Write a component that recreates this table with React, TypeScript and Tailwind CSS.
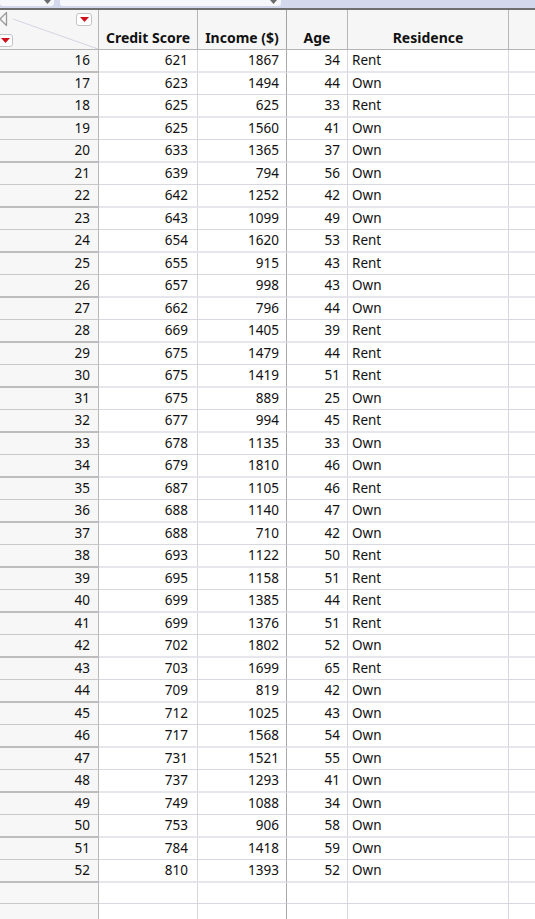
import React from "react";

const rows: [number, number, number, number, string][] = [
  [16, 621, 1867, 34, "Rent"],
  [17, 623, 1494, 44, "Own"],
  [18, 625, 625, 33, "Rent"],
  [19, 625, 1560, 41, "Own"],
  [20, 633, 1365, 37, "Own"],
  [21, 639, 794, 56, "Own"],
  [22, 642, 1252, 42, "Own"],
  [23, 643, 1099, 49, "Own"],
  [24, 654, 1620, 53, "Rent"],
  [25, 655, 915, 43, "Rent"],
  [26, 657, 998, 43, "Own"],
  [27, 662, 796, 44, "Own"],
  [28, 669, 1405, 39, "Rent"],
  [29, 675, 1479, 44, "Rent"],
  [30, 675, 1419, 51, "Rent"],
  [31, 675, 889, 25, "Own"],
  [32, 677, 994, 45, "Rent"],
  [33, 678, 1135, 33, "Own"],
  [34, 679, 1810, 46, "Own"],
  [35, 687, 1105, 46, "Rent"],
  [36, 688, 1140, 47, "Own"],
  [37, 688, 710, 42, "Own"],
  [38, 693, 1122, 50, "Rent"],
  [39, 695, 1158, 51, "Rent"],
  [40, 699, 1385, 44, "Rent"],
  [41, 699, 1376, 51, "Rent"],
  [42, 702, 1802, 52, "Own"],
  [43, 703, 1699, 65, "Rent"],
  [44, 709, 819, 42, "Own"],
  [45, 712, 1025, 43, "Own"],
  [46, 717, 1568, 54, "Own"],
  [47, 731, 1521, 55, "Own"],
  [48, 737, 1293, 41, "Own"],
  [49, 749, 1088, 34, "Own"],
  [50, 753, 906, 58, "Own"],
  [51, 784, 1418, 59, "Own"],
  [52, 810, 1393, 52, "Own"],
];

const cols = "grid grid-cols-[99px_99px_89px_61px_161px_1fr]";

function RedButton() {
  return (
    <div className="w-[16px] h-[13px] rounded-[3px] border border-[#c4c4c4] bg-white flex items-center justify-center">
      <svg width="9" height="5" viewBox="0 0 9 5">
        <path d="M0 0 L9 0 L4.5 5 Z" fill="#d0101c" />
      </svg>
    </div>
  );
}

function DataRow({ r }: { r: [number, number, number, number, string] }) {
  const thick = r[0] % 2 === 0;
  const num = thick
    ? "border-b-2 border-b-[#bdbdbd]"
    : "border-b border-b-[#c8c8c8]";
  const cell = thick
    ? "border-b-2 border-b-[#e6e6ed]"
    : "border-b border-b-[#d8d8e0]";
  return (
    <div className={`${cols} h-[22.5px]`}>
      <div className={`bg-[#f7f7f7] border-r border-r-[#b9b9b9] ${num} text-right pr-[8px] leading-[21px]`}>{r[0]}</div>
      <div className={`border-r border-r-[#d6d6de] ${cell} text-right pr-[9px] leading-[21px]`}>{r[1]}</div>
      <div className={`border-r border-r-[#a9a9a9] ${cell} text-right pr-[7px] leading-[21px]`}>{r[2]}</div>
      <div className={`border-r border-r-[#d6d6de] ${cell} text-right pr-[7px] leading-[21px]`}>{r[3]}</div>
      <div className={`border-r border-r-[#d6d6de] ${cell} pl-[4px] leading-[21px]`}>{r[4]}</div>
      <div className={cell}></div>
    </div>
  );
}

function EmptyRow({ last }: { last?: boolean }) {
  const num = last ? "" : "border-b border-b-[#c8c8c8]";
  const cell = last ? "" : "border-b border-b-[#d8d8e0]";
  return (
    <div className={`${cols} ${last ? "h-[15px]" : "h-[21px]"}`}>
      <div className={`bg-[#f7f7f7] border-r border-r-[#b9b9b9] ${num}`}></div>
      <div className={`border-r border-r-[#d6d6de] ${cell}`}></div>
      <div className={`border-r border-r-[#a9a9a9] ${cell}`}></div>
      <div className={`border-r border-r-[#d6d6de] ${cell}`}></div>
      <div className={`border-r border-r-[#d6d6de] ${cell}`}></div>
      <div className={cell}></div>
    </div>
  );
}

export default function App() {
  return (
    <div className="w-[535px] h-[919px] overflow-hidden bg-white text-[13.5px] text-[#111] font-['Noto_Sans','Open_Sans',sans-serif]">
      {/* top toolbar strip */}
      <div className="h-[8px] bg-[#d4d8ec] flex items-start gap-[6px]">
        <div className="w-[54px] h-[6px] bg-[#f6f7fb] rounded-b-[3px] flex justify-end pr-[3px]">
          <svg width="7" height="4" viewBox="0 0 7 4">
            <path d="M0 0 L7 0 L3.5 4 Z" fill="#6b6b6b" />
          </svg>
        </div>
        <div className="w-[221px] h-[6px] bg-[#f6f7fb] rounded-b-[3px] flex justify-end pr-[4px]">
          <svg width="7" height="4" viewBox="0 0 7 4">
            <path d="M0 0 L7 0 L3.5 4 Z" fill="#6b6b6b" />
          </svg>
        </div>
      </div>
      <div className="h-[2px] bg-[#6e6e6e]"></div>

      {/* header */}
      <div className={`${cols} h-[40px] bg-[#f6f6f6] border-b border-b-[#b5b5b5] font-bold text-[14px]`}>
        <div className="relative border-r border-r-[#b5b5b5]">
          <svg className="absolute inset-0" width="98" height="39" viewBox="0 0 98 39">
            <line x1="13" y1="9" x2="98" y2="39" stroke="#d2d4e4" strokeWidth="1" />
            <path d="M6.5 2.5 L0 9 L6.5 15.5 Z" fill="none" stroke="#9a9a9a" strokeWidth="1.3" strokeLinejoin="round" />
          </svg>
          <div className="absolute left-[76px] top-[3px]">
            <RedButton />
          </div>
          <div className="absolute left-[-3px] top-[24px]">
            <RedButton />
          </div>
        </div>
        <div className="border-r border-r-[#b5b5b5] flex items-end justify-center pb-[1px]">Credit Score</div>
        <div className="border-r border-r-[#a3a3a3] flex items-end justify-center pb-[1px]">Income ($)</div>
        <div className="border-r border-r-[#b5b5b5] flex items-end justify-center pb-[1px]">Age</div>
        <div className="border-r border-r-[#b5b5b5] flex items-end justify-center pb-[1px]">Residence</div>
        <div></div>
      </div>

      {rows.map((r) => (
        <DataRow key={r[0]} r={r} />
      ))}
      <EmptyRow />
      <EmptyRow last />
    </div>
  );
}
